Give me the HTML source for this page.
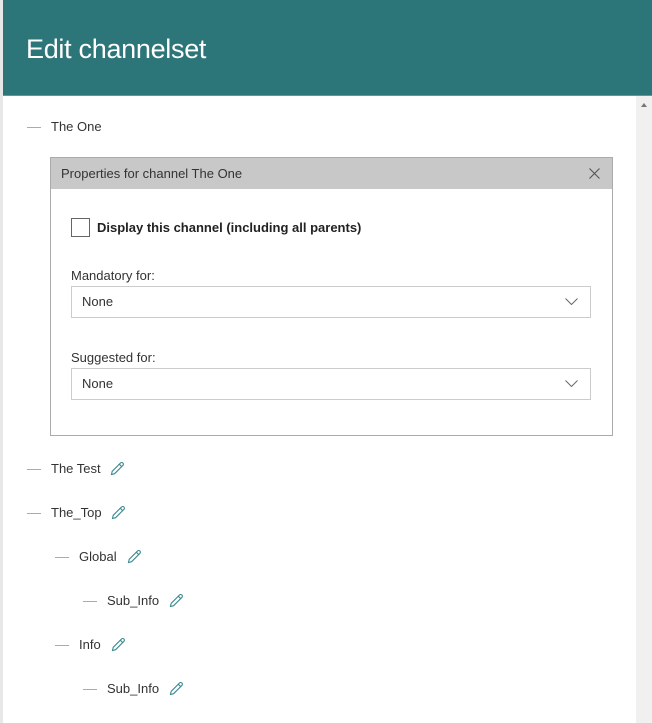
<!DOCTYPE html>
<html><head><meta charset="utf-8"><style>
*{margin:0;padding:0;box-sizing:border-box}
body{width:652px;height:723px;overflow:hidden;background:#e8e8e8;font-family:"Liberation Sans",sans-serif;position:relative;color:#333}
.panel{position:absolute;left:3px;top:0;width:649px;height:723px;background:#fff}
.hdr{position:absolute;left:0;top:0;width:649px;height:96px;background:#2c7579;border-bottom:1px solid #5a9a9d}
.hdr h1{position:absolute;left:23px;top:34px;font-weight:normal;font-size:27px;color:#fff;letter-spacing:-0.3px}
.sb{position:absolute;left:633px;top:96px;width:16px;height:627px;background:#f0f0f0}
.sb:before{content:"";position:absolute;left:5px;top:7px;border-left:3px solid transparent;border-right:3px solid transparent;border-bottom:4px solid #777}
.it{position:absolute;font-size:13px;color:#333;height:16px;line-height:16px}
.it .d{position:absolute;left:0;top:8px;width:14px;height:1px;background:#aaa}
.it span{position:absolute;left:24px;top:0;white-space:nowrap}
.it svg{position:absolute;top:0}
.box{position:absolute;left:47px;top:157px;width:563px;height:279px;border:1px solid #aaa;background:#fff}
.bh{height:31px;background:#c8c8c8;font-size:13px;line-height:31px;padding-left:10px;color:#333}
.x{position:absolute;right:12px;top:10px}
.cb{position:absolute;left:20px;top:60px;width:19px;height:19px;border:1px solid #666;background:#fff}
.cbl{position:absolute;left:46px;top:62px;font-weight:bold;font-size:13px;color:#222}
.lbl{position:absolute;left:20px;font-size:13px;color:#333}
.dd{position:absolute;left:20px;width:520px;height:32px;border:1px solid #ccc;font-size:13px;line-height:30px;padding-left:10px;color:#333}
.dd svg{position:absolute;right:12px;top:11px}
</style></head><body>
<div class="panel">
<div class="hdr"><h1>Edit channelset</h1></div>
<div class="sb"></div>
<div class="it" style="left:24px;top:119px"><div class="d"></div><span>The One</span></div>
<div class="box">
<div class="bh">Properties for channel The One</div>
<svg class="x" width="11" height="11" viewBox="0 0 11 11"><path d="M0.5 0.5L10.5 10.5M10.5 0.5L0.5 10.5" stroke="#555" stroke-width="1.1"/></svg>
<div class="cb"></div>
<div class="cbl">Display this channel (including all parents)</div>
<div class="lbl" style="top:110px">Mandatory for:</div>
<div class="dd" style="top:128px">None<svg width="13" height="7" viewBox="0 0 13 7"><path d="M0.5 0.5L6.5 6.5L12.5 0.5" stroke="#666" fill="none"/></svg></div>
<div class="lbl" style="top:192px">Suggested for:</div>
<div class="dd" style="top:210px">None<svg width="13" height="7" viewBox="0 0 13 7"><path d="M0.5 0.5L6.5 6.5L12.5 0.5" stroke="#666" fill="none"/></svg></div>
</div>
<div class="it" style="left:24px;top:461px"><div class="d"></div><span>The Test</span><svg style="left:83px" width="15" height="15" viewBox="0 0 15 15"><path d="M1.5 13.5L2.2 10.3L10.5 2a1.6 1.6 0 0 1 2.4 2.4L4.6 12.7Z M9.3 3.2L11.7 5.6" fill="none" stroke="#3b8a8e" stroke-width="1.1"/></svg></div>
<div class="it" style="left:24px;top:505px"><div class="d"></div><span>The_Top</span><svg style="left:84px" width="15" height="15" viewBox="0 0 15 15"><path d="M1.5 13.5L2.2 10.3L10.5 2a1.6 1.6 0 0 1 2.4 2.4L4.6 12.7Z M9.3 3.2L11.7 5.6" fill="none" stroke="#3b8a8e" stroke-width="1.1"/></svg></div>
<div class="it" style="left:52px;top:549px"><div class="d"></div><span>Global</span><svg style="left:72px" width="15" height="15" viewBox="0 0 15 15"><path d="M1.5 13.5L2.2 10.3L10.5 2a1.6 1.6 0 0 1 2.4 2.4L4.6 12.7Z M9.3 3.2L11.7 5.6" fill="none" stroke="#3b8a8e" stroke-width="1.1"/></svg></div>
<div class="it" style="left:80px;top:593px"><div class="d"></div><span>Sub_Info</span><svg style="left:86px" width="15" height="15" viewBox="0 0 15 15"><path d="M1.5 13.5L2.2 10.3L10.5 2a1.6 1.6 0 0 1 2.4 2.4L4.6 12.7Z M9.3 3.2L11.7 5.6" fill="none" stroke="#3b8a8e" stroke-width="1.1"/></svg></div>
<div class="it" style="left:52px;top:637px"><div class="d"></div><span>Info</span><svg style="left:56px" width="15" height="15" viewBox="0 0 15 15"><path d="M1.5 13.5L2.2 10.3L10.5 2a1.6 1.6 0 0 1 2.4 2.4L4.6 12.7Z M9.3 3.2L11.7 5.6" fill="none" stroke="#3b8a8e" stroke-width="1.1"/></svg></div>
<div class="it" style="left:80px;top:681px"><div class="d"></div><span>Sub_Info</span><svg style="left:86px" width="15" height="15" viewBox="0 0 15 15"><path d="M1.5 13.5L2.2 10.3L10.5 2a1.6 1.6 0 0 1 2.4 2.4L4.6 12.7Z M9.3 3.2L11.7 5.6" fill="none" stroke="#3b8a8e" stroke-width="1.1"/></svg></div>
</div>
</body></html>
